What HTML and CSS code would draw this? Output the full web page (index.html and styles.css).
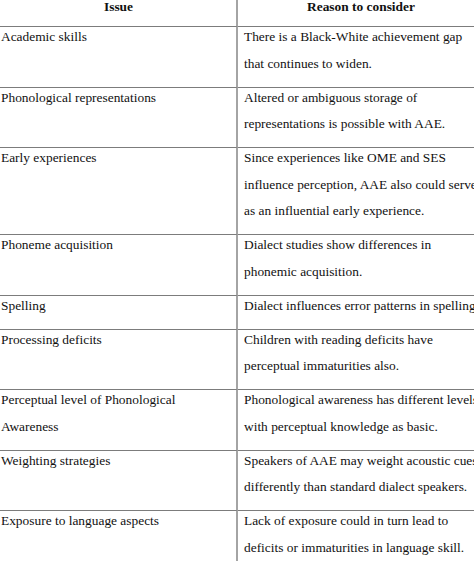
FILE: index.html
```
<!DOCTYPE html>
<html lang="en">
<head>
<meta charset="utf-8">
<title>Issues and reasons to consider</title>
<link rel="stylesheet" href="styles.css">
</head>
<body>
<table class="issues">
  <colgroup>
    <col class="col-issue">
    <col class="col-reason">
  </colgroup>
  <thead>
    <tr>
      <th class="cell issue"><div class="txt">Issue</div></th>
      <th class="cell reason"><div class="txt">Reason to consider</div></th>
    </tr>
  </thead>
  <tbody>
    <tr>
      <td class="cell issue"><div class="txt">Academic skills</div></td>
      <td class="cell reason"><div class="txt">There is a Black-White achievement gap<br>that continues to widen.</div></td>
    </tr>
    <tr>
      <td class="cell issue"><div class="txt">Phonological representations</div></td>
      <td class="cell reason"><div class="txt">Altered or ambiguous storage of<br>representations is possible with AAE.</div></td>
    </tr>
    <tr>
      <td class="cell issue"><div class="txt">Early experiences</div></td>
      <td class="cell reason"><div class="txt">Since experiences like OME and SES<br>influence perception, AAE also could serve<br>as an influential early experience.</div></td>
    </tr>
    <tr>
      <td class="cell issue"><div class="txt">Phoneme acquisition</div></td>
      <td class="cell reason"><div class="txt">Dialect studies show differences in<br>phonemic acquisition.</div></td>
    </tr>
    <tr>
      <td class="cell issue"><div class="txt">Spelling</div></td>
      <td class="cell reason"><div class="txt">Dialect influences error patterns in spelling.</div></td>
    </tr>
    <tr>
      <td class="cell issue"><div class="txt">Processing deficits</div></td>
      <td class="cell reason"><div class="txt">Children with reading deficits have<br>perceptual immaturities also.</div></td>
    </tr>
    <tr>
      <td class="cell issue"><div class="txt">Perceptual level of Phonological<br>Awareness</div></td>
      <td class="cell reason"><div class="txt">Phonological awareness has different levels<br>with perceptual knowledge as basic.</div></td>
    </tr>
    <tr>
      <td class="cell issue"><div class="txt">Weighting strategies</div></td>
      <td class="cell reason"><div class="txt">Speakers of AAE may weight acoustic cues<br>differently than standard dialect speakers.</div></td>
    </tr>
    <tr>
      <td class="cell issue"><div class="txt">Exposure to language aspects</div></td>
      <td class="cell reason"><div class="txt">Lack of exposure could in turn lead to<br>deficits or immaturities in language skill.</div></td>
    </tr>
  </tbody>
</table>
</body>
</html>
```
FILE: styles.css
```
html, body {
  margin: 0;
  padding: 0;
  background: #ffffff;
  overflow: hidden;
}

body {
  width: 474px;
  height: 561px;
  font-family: "Liberation Serif", "Times New Roman", serif;
  font-size: 13.4px;
  color: #111111;
}

.issues {
  table-layout: fixed;
  width: 478px;
  margin-top: -1px;
  border-collapse: separate;
  border-spacing: 0;
}

.col-issue {
  width: 238px;
}

.col-reason {
  width: 240px;
}

.cell {
  box-sizing: border-box;
  vertical-align: top;
  text-align: left;
  font-weight: normal;
  line-height: 26.5px;
  padding: 0 0 9.5px 0;
  border-bottom: 1px solid #7c7c7c;
  white-space: nowrap;
  overflow: visible;
}

.cell .txt {
  margin-top: -3px;
}

.cell.issue {
  padding-left: 1px;
  border-right: 2px solid #a4a4a4;
}

.cell.reason {
  padding-left: 6px;
}

thead .cell {
  font-weight: bold;
  text-align: center;
  padding: 0 0 6px 0;
}

thead .cell .txt {
  margin-top: -5.5px;
}
```
